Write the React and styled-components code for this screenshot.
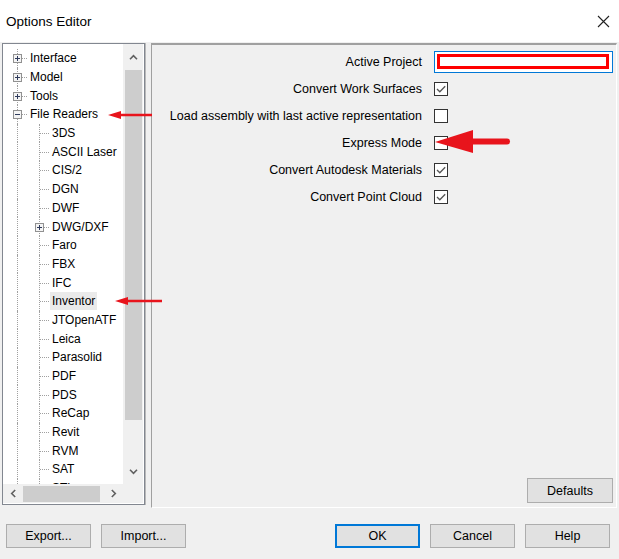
import styled, { createGlobalStyle } from 'styled-components'

const GlobalStyle = createGlobalStyle`
  html, body {
    margin: 0;
    padding: 0;
    background: #f0f0f0;
  }
  body {
    font-family: 'Liberation Sans', Arial, sans-serif;
    color: #000;
  }
`

const treeItems = [
  { label: 'Interface', level: 0, toggle: '+' },
  { label: 'Model', level: 0, toggle: '+' },
  { label: 'Tools', level: 0, toggle: '+' },
  { label: 'File Readers', level: 0, toggle: '-' },
  { label: '3DS', level: 1 },
  { label: 'ASCII Laser', level: 1 },
  { label: 'CIS/2', level: 1 },
  { label: 'DGN', level: 1 },
  { label: 'DWF', level: 1 },
  { label: 'DWG/DXF', level: 1, toggle: '+' },
  { label: 'Faro', level: 1 },
  { label: 'FBX', level: 1 },
  { label: 'IFC', level: 1 },
  { label: 'Inventor', level: 1, selected: true },
  { label: 'JTOpenATF', level: 1 },
  { label: 'Leica', level: 1 },
  { label: 'Parasolid', level: 1 },
  { label: 'PDF', level: 1 },
  { label: 'PDS', level: 1 },
  { label: 'ReCap', level: 1 },
  { label: 'Revit', level: 1 },
  { label: 'RVM', level: 1 },
  { label: 'SAT', level: 1 },
  { label: 'STL', level: 1 },
]

const options = [
  { label: 'Convert Work Surfaces', checked: true },
  { label: 'Load assembly with last active representation', checked: false },
  { label: 'Express Mode', checked: false },
  { label: 'Convert Autodesk Materials', checked: true },
  { label: 'Convert Point Cloud', checked: true },
]

const ToggleIcon = ({ open }) => (
  <ToggleBox>
    <svg width="9" height="9" viewBox="0 0 9 9">
      <rect x="0.5" y="0.5" width="8" height="8" fill="#f4f4f4" stroke="#919191" />
      <line x1="2" y1="4.5" x2="7" y2="4.5" stroke="#2f3b5c" />
      {!open && <line x1="4.5" y1="2" x2="4.5" y2="7" stroke="#2f3b5c" />}
    </svg>
  </ToggleBox>
)

const Chevron = ({ dir }) => (
  <ChevronSvg $dir={dir} width="9" height="9" viewBox="0 0 9 9">
    <path d="M1 6.2 L4.5 2.7 L8 6.2" fill="none" stroke="#606060" strokeWidth="1.6" />
  </ChevronSvg>
)

const CheckBox = ({ checked }) => (
  <Check>
    {checked && (
      <svg width="12" height="12" viewBox="0 0 12 12">
        <path d="M2 6 L4.8 8.8 L10.2 3.2" fill="none" stroke="#555" strokeWidth="1.3" />
      </svg>
    )}
  </Check>
)

const App = () => {
  return (
    <Root>
      <GlobalStyle />
      <TitleBar>
        <Title>Options Editor</Title>
        <CloseIcon width="13" height="13" viewBox="0 0 13 13">
          <path d="M1 1 L12 12 M12 1 L1 12" stroke="#222" strokeWidth="1.1" />
        </CloseIcon>
      </TitleBar>

      <Main>
        <TreePanel>
          <TreeView>
            {treeItems.map((item) => (
              <TreeRow key={item.label}>
                <Gutter>{item.level === 0 && item.toggle && <ToggleIcon open={item.toggle === '-'} />}</Gutter>
                {item.level === 1 && (
                  <Gutter>{item.toggle && <ToggleIcon open={item.toggle === '-'} />}</Gutter>
                )}
                <TreeLabel $selected={item.selected}>{item.label}</TreeLabel>
              </TreeRow>
            ))}
          </TreeView>
          <VScroll>
            <ScrollButton $v>
              <Chevron dir="up" />
            </ScrollButton>
            <VThumb />
            <Spacer />
            <ScrollButton $v>
              <Chevron dir="down" />
            </ScrollButton>
          </VScroll>
          <HScroll>
            <ScrollButton>
              <Chevron dir="left" />
            </ScrollButton>
            <HThumb />
            <Spacer />
            <ScrollButton>
              <Chevron dir="right" />
            </ScrollButton>
          </HScroll>
          <Corner />
        </TreePanel>

        <SettingsPanel>
          <OptionsGrid>
            <OptionLabel>Active Project</OptionLabel>
            <TextField>
              <RedMark />
            </TextField>
            {options.map((opt) => (
              <OptionRow key={opt.label}>
                <OptionLabel>{opt.label}</OptionLabel>
                <CheckBox checked={opt.checked} />
              </OptionRow>
            ))}
          </OptionsGrid>
          <Spacer />
          <PanelFooter>
            <Button $wide>Defaults</Button>
          </PanelFooter>
        </SettingsPanel>
      </Main>

      <Footer>
        <ButtonGroup>
          <Button>Export...</Button>
          <Button>Import...</Button>
        </ButtonGroup>
        <ButtonGroup>
          <Button $primary>OK</Button>
          <Button>Cancel</Button>
          <Button>Help</Button>
        </ButtonGroup>
      </Footer>

      <Annotations width="619" height="559" viewBox="0 0 619 559">
        <g fill="#e8141c" stroke="#e8141c">
          <polygon points="108,115 121,111 121,119" stroke="none" />
          <line x1="120" y1="115" x2="152" y2="115" strokeWidth="2.5" />
          <polygon points="115,301 128,297 128,305" stroke="none" />
          <line x1="127" y1="301" x2="162" y2="301" strokeWidth="2.5" />
          <polygon points="435,142 473,130 473,153" stroke="none" />
          <line x1="470" y1="141.5" x2="507" y2="141.5" strokeWidth="6" strokeLinecap="round" />
        </g>
      </Annotations>
    </Root>
  )
}

const Root = styled.div`
  position: relative;
  width: 619px;
  height: 559px;
  background: #f0f0f0;
  display: flex;
  flex-direction: column;
  overflow: hidden;
`
const TitleBar = styled.div`
  height: 42px;
  background: #fff;
  display: flex;
  align-items: center;
  justify-content: space-between;
  padding: 0 9px 0 6px;
  box-sizing: border-box;
`
const Title = styled.div`
  font-size: 13.5px;
  color: #000;
`
const CloseIcon = styled.svg`
  display: block;
`
const Main = styled.div`
  display: flex;
  gap: 6px;
  padding: 1px 2px 0 2px;
  height: 466px;
  box-sizing: border-box;
`
const TreePanel = styled.div`
  width: 143px;
  height: 462px;
  box-sizing: border-box;
  border: 1px solid #828790;
  box-shadow: 1px 0 0 #b9b9b9;
  background: #fff;
  display: grid;
  grid-template-columns: 120px 20px;
  grid-template-rows: 440px 19px;
`
const TreeView = styled.div`
  overflow: hidden;
  padding: 5px 0 0 3px;
  font-size: 12px;
  background: #fff;
`
const TreeRow = styled.div`
  display: flex;
  height: 18.7px;
  align-items: center;
`
const Gutter = styled.div`
  position: relative;
  width: 22px;
  align-self: stretch;
  flex-shrink: 0;

  &::before {
    content: '';
    position: absolute;
    left: 11px;
    top: 0;
    bottom: 0;
    border-left: 1px dotted #a0a0a0;
  }
  &:last-of-type::after {
    content: '';
    position: absolute;
    left: 12px;
    right: 1px;
    top: 50%;
    border-top: 1px dotted #a0a0a0;
  }
`
const ToggleBox = styled.div`
  position: absolute;
  left: 7px;
  top: calc(50% - 4px);
  width: 9px;
  height: 9px;
  z-index: 1;
  background: #fff;

  svg {
    display: block;
  }
`
const TreeLabel = styled.span`
  padding: 0 2px;
  line-height: 18px;
  white-space: nowrap;
  background: ${(p) => (p.$selected ? '#eaeaea' : 'transparent')};
`
const VScroll = styled.div`
  background: #f0f0f0;
  display: flex;
  flex-direction: column;
  align-items: center;
`
const HScroll = styled.div`
  background: #f0f0f0;
  display: flex;
  align-items: center;
`
const Corner = styled.div`
  background: #f0f0f0;
`
const ScrollButton = styled.div`
  display: flex;
  align-items: center;
  justify-content: center;
  flex-shrink: 0;
  width: ${(p) => (p.$v ? '100%' : '20px')};
  height: ${(p) => (p.$v ? '26px' : '100%')};
`
const ChevronSvg = styled.svg`
  display: block;
  transform: rotate(
    ${(p) => ({ up: 0, right: 90, down: 180, left: 270 })[p.$dir]}deg
  );
`
const VThumb = styled.div`
  width: 17px;
  height: 350px;
  background: #cdcdcd;
`
const HThumb = styled.div`
  width: 77px;
  height: 16px;
  background: #cdcdcd;
`
const Spacer = styled.div`
  flex: 1;
`
const SettingsPanel = styled.div`
  flex: 1;
  height: 465px;
  box-sizing: border-box;
  border-top: 2px solid #a0a0a0;
  border-left: 1px solid #a0a0a0;
  border-right: 1px solid #fff;
  border-bottom: 1px solid #fff;
  display: flex;
  flex-direction: column;
  padding: 3px 3px 3px 0;
`
const OptionsGrid = styled.div`
  display: grid;
  grid-template-columns: 270px 179px;
  grid-auto-rows: 27px;
  column-gap: 12px;
  align-items: center;
`
const OptionRow = styled.div`
  display: contents;
`
const OptionLabel = styled.div`
  text-align: right;
  font-size: 12.5px;
  white-space: nowrap;
`
const TextField = styled.div`
  height: 22px;
  box-sizing: border-box;
  border: 1px solid #0078d7;
  background: #fff;
  padding: 2px 3px 3px 2px;
`
const RedMark = styled.div`
  height: 100%;
  box-sizing: border-box;
  border: 3px solid #ff0000;
  background: #fff;
`
const Check = styled.div`
  width: 14px;
  height: 14px;
  box-sizing: border-box;
  border: 1px solid #333;
  background: #fff;
  display: flex;
  align-items: center;
  justify-content: center;

  svg {
    display: block;
  }
`
const PanelFooter = styled.div`
  display: flex;
  justify-content: flex-end;
  padding-bottom: 1px;
`
const Footer = styled.div`
  display: flex;
  justify-content: space-between;
  padding: 16px 9px 0 6px;
`
const ButtonGroup = styled.div`
  display: flex;
  gap: 10px;
`
const Button = styled.button`
  width: ${(p) => (p.$wide ? '86px' : '85px')};
  height: ${(p) => (p.$wide ? '25px' : '24px')};
  box-sizing: border-box;
  background: #e1e1e1;
  border: 1px solid ${(p) => (p.$primary ? '#0078d7' : '#adadad')};
  box-shadow: ${(p) => (p.$primary ? 'inset 0 0 0 1px #0078d7' : 'none')};
  font-family: 'Liberation Sans', Arial, sans-serif;
  font-size: 12.5px;
  color: #000;
  padding: 0;
`
const Annotations = styled.svg`
  position: absolute;
  left: 0;
  top: 0;
  pointer-events: none;
`

export default App
